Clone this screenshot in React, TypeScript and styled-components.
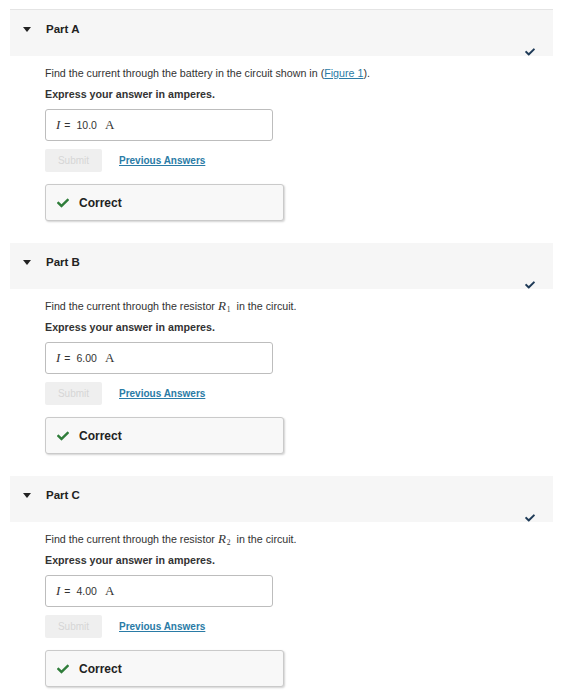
import React from "react";
import styled, { createGlobalStyle } from "styled-components";
import { FaCheck } from "react-icons/fa";

const GlobalStyle = createGlobalStyle`
  body {
    margin: 0;
    background: #fff;
    font-family: "Liberation Sans", Arial, sans-serif;
    color: #333;
  }
`;

const Page = styled.main`
  padding: 9px 0 0 10px;
  width: 543px;
`;

const Section = styled.section`
  margin-bottom: 22px;
`;

const Header = styled.div<{ first?: boolean }>`
  display: flex;
  align-items: flex-start;
  height: 34px;
  padding-top: 12px;
  background: #f6f6f6;
  border-top: ${(p) => (p.first ? "1px solid #e4e4e4" : "none")};
`;

const Caret = styled.span`
  width: 0;
  height: 0;
  margin: 5px 0 0 13px;
  border-left: 4px solid transparent;
  border-right: 4px solid transparent;
  border-top: 5px solid #222;
`;

const PartTitle = styled.h2`
  margin: 0 0 0 15px;
  font-size: 11.5px;
  line-height: 14px;
  font-weight: bold;
  color: #222;
`;

const DoneMark = styled.span`
  display: flex;
  margin-left: auto;
  margin-right: 18px;
  align-self: flex-end;
  margin-bottom: -1px;
  color: #1e3a57;
  font-size: 10px;
`;

const Body = styled.div`
  padding: 10px 0 0 35px;
  display: flex;
  flex-direction: column;
  align-items: flex-start;
`;

const Prompt = styled.p`
  margin: 0;
  font-size: 10.7px;
  line-height: 14px;
  height: 14px;
  color: #333;
`;

const Instruction = styled.p`
  margin: 7px 0 0;
  font-size: 10.7px;
  line-height: 14px;
  font-weight: bold;
  color: #333;
`;

const Link = styled.a`
  color: #2a7ba6;
  text-decoration: underline;
`;

const MathVar = styled.span`
  font-family: "Liberation Serif", "Times New Roman", serif;
  font-style: italic;
  font-size: 13px;
  line-height: 0;
  sub {
    font-style: normal;
    font-size: 7.5px;
    line-height: 0;
    vertical-align: -2px;
    margin-left: 1px;
  }
`;

const MathUnit = styled.span`
  font-family: "Liberation Serif", "Times New Roman", serif;
  font-size: 13px;
  margin-left: 8px;
`;

const AnswerBox = styled.div`
  margin-top: 8px;
  width: 228px;
  height: 32px;
  box-sizing: border-box;
  border: 1px solid #bdbdbd;
  border-radius: 3px;
  display: flex;
  align-items: center;
  padding-left: 10px;
  font-size: 10.5px;
  color: #333;
`;

const Equals = styled.span`
  margin: 0 6px 0 4px;
`;

const ActionRow = styled.div`
  margin-top: 8px;
  display: flex;
  align-items: center;
  gap: 17px;
`;

const SubmitButton = styled.button`
  width: 57px;
  height: 23px;
  border: none;
  border-radius: 2px;
  background: #efefef;
  color: #d6d6d6;
  font-family: "Liberation Sans", Arial, sans-serif;
  font-size: 10px;
  padding: 0;
`;

const PrevLink = styled.a`
  font-size: 10px;
  font-weight: bold;
  color: #2a7ba6;
  text-decoration: underline;
`;

const Feedback = styled.div`
  margin-top: 12px;
  width: 239px;
  height: 37px;
  box-sizing: border-box;
  border: 1px solid #cacaca;
  border-radius: 3px;
  background: #f8f8f8;
  box-shadow: 1px 1px 2px rgba(0, 0, 0, 0.18);
  display: flex;
  align-items: center;
  padding-left: 11px;
  gap: 10px;
`;

const GreenCheck = styled.span`
  display: flex;
  color: #2f7d3a;
  font-size: 12px;
`;

const FeedbackText = styled.span`
  font-size: 12px;
  font-weight: bold;
  color: #222;
`;

type Part = {
  label: string;
  prompt: React.ReactNode;
  value: string;
};

const parts: Part[] = [
  {
    label: "Part A",
    prompt: (
      <>
        Find the current through the battery in the circuit shown in (
        <Link href="#">Figure 1</Link>).
      </>
    ),
    value: "10.0",
  },
  {
    label: "Part B",
    prompt: (
      <>
        Find the current through the resistor{" "}
        <MathVar>
          R<sub>1</sub>
        </MathVar>{" "}
        &nbsp;in the circuit.
      </>
    ),
    value: "6.00",
  },
  {
    label: "Part C",
    prompt: (
      <>
        Find the current through the resistor{" "}
        <MathVar>
          R<sub>2</sub>
        </MathVar>{" "}
        &nbsp;in the circuit.
      </>
    ),
    value: "4.00",
  },
];

export default function App() {
  return (
    <>
      <GlobalStyle />
      <Page>
        {parts.map((part, i) => (
          <Section key={part.label}>
            <Header first={i === 0}>
              <Caret />
              <PartTitle>{part.label}</PartTitle>
              <DoneMark>
                <FaCheck />
              </DoneMark>
            </Header>
            <Body>
              <Prompt>{part.prompt}</Prompt>
              <Instruction>Express your answer in amperes.</Instruction>
              <AnswerBox>
                <MathVar>I</MathVar>
                <Equals>=</Equals>
                {part.value}
                <MathUnit>A</MathUnit>
              </AnswerBox>
              <ActionRow>
                <SubmitButton disabled>Submit</SubmitButton>
                <PrevLink href="#">Previous Answers</PrevLink>
              </ActionRow>
              <Feedback>
                <GreenCheck>
                  <FaCheck />
                </GreenCheck>
                <FeedbackText>Correct</FeedbackText>
              </Feedback>
            </Body>
          </Section>
        ))}
      </Page>
    </>
  );
}
